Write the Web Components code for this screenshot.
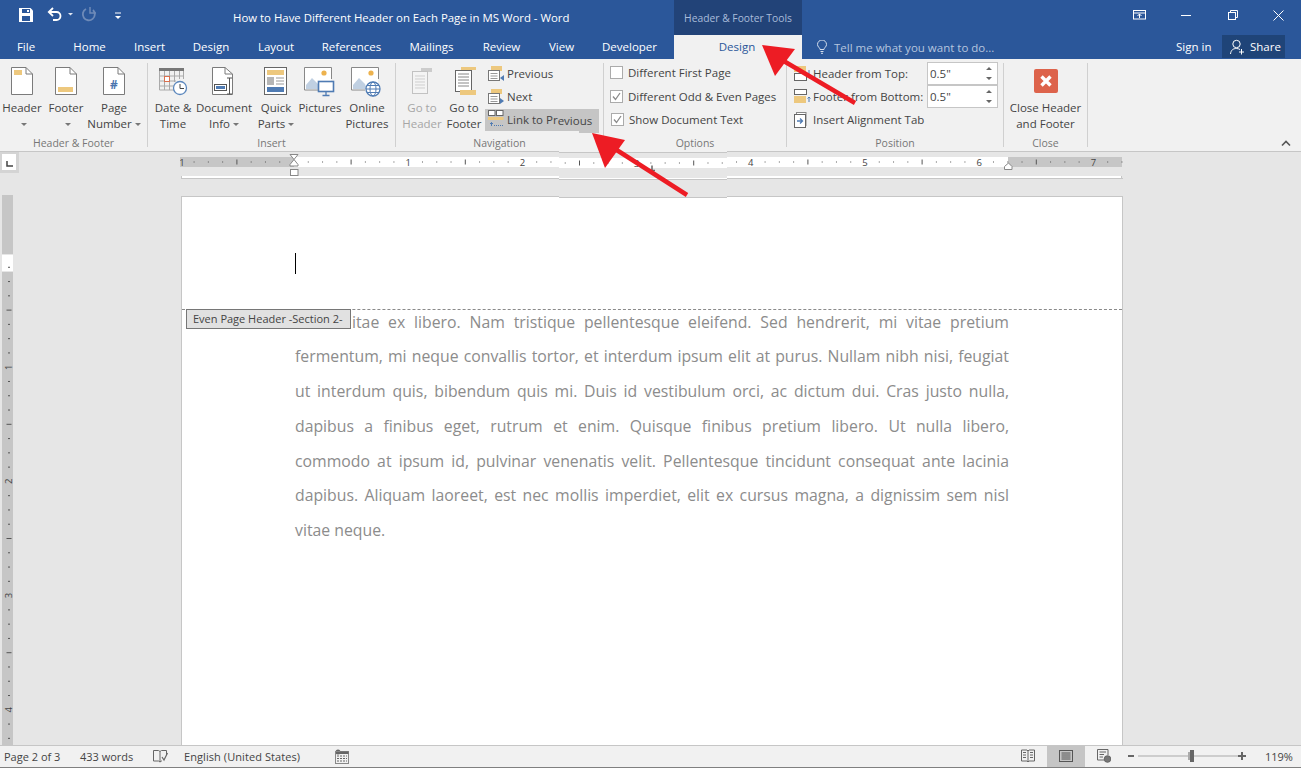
<!DOCTYPE html>
<html lang="en"><head><meta charset="utf-8"><title>Word</title>
<style>html,body{margin:0;padding:0;background:#e6e6e6}</style></head>
<body>
<word-app>
  <title-bar slot="top"></title-bar>
  <ribbon-bar slot="ribbon">
    <ribbon-group style="width:148px" label="Header &amp; Footer">
      <big-btn style="width:44px"><svg slot="icon" width="22" height="29" viewBox="0 0 22 29"><path d="M.5.5H15L21.5 7V27.5H.5Z" fill="#fff" stroke="#7b7b7b"/><path d="M15 .5V7H21.5" fill="none" stroke="#7b7b7b"/><rect x="3" y="3" width="8" height="5" fill="#edc87e"/></svg>Header<br><r-caret></r-caret></big-btn>
      <big-btn style="width:44px"><svg slot="icon" width="22" height="29" viewBox="0 0 22 29"><path d="M.5.5H15L21.5 7V27.5H.5Z" fill="#fff" stroke="#7b7b7b"/><path d="M15 .5V7H21.5" fill="none" stroke="#7b7b7b"/><rect x="3" y="20" width="15" height="5" fill="#edc87e"/></svg>Footer<br><r-caret></r-caret></big-btn>
      <big-btn style="width:52px"><svg slot="icon" width="22" height="29" viewBox="0 0 22 29"><path d="M.5.5H15L21.5 7V27.5H.5Z" fill="#fff" stroke="#7b7b7b"/><path d="M15 .5V7H21.5" fill="none" stroke="#7b7b7b"/><text x="11" y="22" text-anchor="middle" font-size="12" font-weight="700" font-family="Open Sans" fill="#4a74ad">#</text></svg>Page<br>Number<r-caret></r-caret></big-btn>
    </ribbon-group>
    <ribbon-group style="width:248px;padding-left:2px" label="Insert">
      <big-btn style="width:46px"><svg slot="icon" width="30" height="30" viewBox="0 0 30 30"><rect x="1" y="1" width="25" height="3" fill="#777"/><path d="M1.5 4V23H18M6.5 4V23M11.5 4V23M16.5 4V15M21.5 4V12M25.5 4V12M1.5 9H25.5M1.5 14H18M1.5 19H16" fill="none" stroke="#aaa"/><rect x="6.5" y="9.5" width="5" height="5" fill="#fff" stroke="#d9704f"/><circle cx="22" cy="21" r="6.5" fill="#fff" stroke="#5b87bd" stroke-width="1.3"/><path d="M22 17V21.5H26" fill="none" stroke="#444"/></svg>Date &amp;<br>Time</big-btn>
      <big-btn style="width:56px"><svg slot="icon" width="24" height="29" viewBox="0 0 24 29"><path d="M.5.5H13L20.5 7V27.5H.5Z" fill="#fff" stroke="#7b7b7b"/><path d="M13 .5V7H20.5" fill="none" stroke="#7b7b7b"/><rect x="2.5" y="17.5" width="12" height="6" fill="#fff" stroke="#555"/><rect x="4" y="19" width="9" height="3" fill="#4f7bb3"/><path d="M15 11H20M15 27H20M17.5 11V27" stroke="#555" fill="none"/></svg>Document<br>Info<r-caret></r-caret></big-btn>
      <big-btn style="width:48px"><svg slot="icon" width="24" height="29" viewBox="0 0 24 29"><rect x=".5" y=".5" width="22" height="27" fill="#fff" stroke="#666"/><rect x="3" y="3" width="17" height="5" fill="#edc87e"/><rect x="3" y="10" width="7" height="8" fill="#b5b5b5"/><path d="M12 11H20M12 14H20M12 17H20" stroke="#999"/><rect x="3" y="20" width="17" height="5" fill="#4f7bb3"/></svg>Quick<br>Parts<r-caret></r-caret></big-btn>
      <big-btn style="width:40px"><svg slot="icon" width="32" height="32" viewBox="0 0 32 32"><rect x="1" y="1" width="26" height="22" fill="#fff"/><path d="M.5 23V.5H27.5V12M.5 23H14" fill="none" stroke="#888"/><circle cx="20" cy="6" r="2.6" fill="#edb24d"/><path d="M2 22V18L8 11L14 17L16 22Z" fill="#c0d0e2"/><rect x="14.5" y="14.5" width="15" height="10" fill="#fff" stroke="#4f7bb3" stroke-width="1.6"/><path d="M22 25V28M18.5 28.5H25.5" stroke="#4f7bb3" stroke-width="1.3"/></svg>Pictures</big-btn>
      <big-btn style="width:54px"><svg slot="icon" width="32" height="32" viewBox="0 0 32 32"><rect x="1" y="1" width="26" height="22" fill="#fff"/><path d="M.5 23V.5H27.5V12M.5 23H14" fill="none" stroke="#888"/><circle cx="20" cy="6" r="2.6" fill="#edb24d"/><path d="M2 22V18L8 11L14 17L16 22Z" fill="#c0d0e2"/><circle cx="22" cy="22" r="7" fill="#fff" stroke="#4f7bb3" stroke-width="1.3"/><ellipse cx="22" cy="22" rx="3" ry="7" fill="none" stroke="#4f7bb3"/><path d="M15 22H29M16 18.5H28M16 25.5H28" stroke="#4f7bb3"/></svg>Online<br>Pictures</big-btn>
    </ribbon-group>
    <ribbon-group style="width:208px;padding-left:4px" label="Navigation">
      <big-btn style="width:44px;color:#a6a6a6"><svg slot="icon" width="22" height="29" viewBox="0 0 22 29"><rect x="10" y="1" width="11" height="4" fill="#ccc"/><rect x="1.500" y="4.500" width="15" height="22" fill="#f4f4f4" stroke="#c2c2c2"/><path d="M4 9H14M4 12H14M4 15H14M4 18H14M4 21H14" stroke="#cfcfcf"/></svg>Go to<br>Header</big-btn>
      <big-btn style="width:40px"><svg slot="icon" width="24" height="29" viewBox="0 0 24 29" style="margin-left:6px"><rect x="6" y="-2" width="15" height="5" fill="#edc87e"/><rect x=".5" y="3.500" width="16" height="21" fill="#fff" stroke="#666"/><path d="M3 7H14M3 10H14M3 13H14M3 16H14M3 19H14" stroke="#888"/><rect x="5" y="23" width="16" height="5" fill="#edc87e"/></svg>Go to<br>Footer</big-btn>
      <nav-stack style="margin-left:1px">
        <small-btn><svg slot="icon" width="17" height="16" viewBox="0 0 17 16"><rect x="3" y="0" width="11" height="5" fill="#edc87e"/><rect x=".5" y="4.500" width="11" height="10" fill="#fff" stroke="#777"/><path d="M2.500 7.500H9.500M2.500 10H9.500M2.500 12.500H9.500" stroke="#999"/><path d="M16 9V15L12 12Z" fill="#4f7bb3"/></svg>Previous</small-btn>
        <small-btn><svg slot="icon" width="17" height="16" viewBox="0 0 17 16"><rect x="3" y="0" width="11" height="5" fill="#edc87e"/><rect x=".5" y="4.500" width="11" height="10" fill="#fff" stroke="#777"/><path d="M2.500 7.500H9.500M2.500 10H9.500M2.500 12.500H9.500" stroke="#999"/><path d="M12 9V15L16 12Z" fill="#4f7bb3"/></svg>Next</small-btn>
        <small-btn style="background:#c5c5c5"><svg slot="icon" width="17" height="18" viewBox="0 0 17 18"><rect x=".5" y=".5" width="6.500" height="5" fill="#fff" stroke="#666"/><rect x="8.500" y=".5" width="6.500" height="5" fill="#fff" stroke="#666"/><rect x="0" y="7" width="15.500" height="3" fill="#edc87e"/><path d="M3.500 16V12.500M2 14L3.500 12.500L5 14" fill="none" stroke="#4f7bb3"/><path d="M6 15.500H15.500" stroke="#4f7bb3" stroke-dasharray="1 1"/></svg>Link to Pr<ghost-shift>evious</ghost-shift></small-btn>
      </nav-stack>
    </ribbon-group>
    <ribbon-group style="width:183px;padding-left:6px" label="Options">
      <check-stack>
      <check-row>Different First Page</check-row>
      <check-row checked>Different Odd &amp; Even Pages</check-row>
      <check-row checked style="margin-left:1px">Show Document Text</check-row>
      </check-stack>
    </ribbon-group>
    <ribbon-group style="width:217px;padding-left:4px" label="Position">
      <pos-grid>
        <small-btn><svg slot="icon" width="18" height="16" viewBox="0 0 18 16"><rect x="0" y="0" width="12" height="6" fill="#edc87e"/><rect x=".5" y="7.500" width="12" height="7" fill="#fff" stroke="#666"/><path d="M15 4V9" stroke="#4f7bb3"/></svg>Header from Top:</small-btn>
        <small-btn><svg slot="icon" width="18" height="16" viewBox="0 0 18 16"><rect x=".5" y=".5" width="12" height="5" fill="#fff" stroke="#666"/><rect x="0" y="7" width="12" height="7" fill="#edc87e"/><path d="M15 8V13M13.500 9.500L15 8L16.500 9.500" fill="none" stroke="#4f7bb3"/></svg>Footer from Bottom:</small-btn>
        <small-btn><svg slot="icon" width="18" height="16" viewBox="0 0 18 16"><rect x="2.500" y=".5" width="9.500" height="13" fill="#fff" stroke="#888"/><rect x=".5" y="2.500" width="11" height="13" fill="#fff" stroke="#666"/><path d="M3 9H8M6 6.500L8.500 9L6 11.500" fill="none" stroke="#4f7bb3" stroke-width="1.300"/></svg>Insert Alignment Tab</small-btn>
        <spin-box slot="spin">0.5"</spin-box>
        <spin-box slot="spin">0.5"</spin-box>
      </pos-grid>
    </ribbon-group>
    <ribbon-group style="width:84px" label="Close">
      <big-btn style="width:83px"><svg slot="icon" width="24" height="24" viewBox="0 0 24 24" style="margin-top:2px"><rect width="24" height="24" rx="2" fill="#dd634b"/><path d="M7.500 7.500L16.500 16.500M16.500 7.500L7.500 16.500" stroke="#fff" stroke-width="3.400"/></svg>Close Header<br>and Footer</big-btn>
    </ribbon-group>
    <svg slot="collapse" width="10" height="7" viewBox="0 0 10 7"><path d="M1 5.500L5 1.500L9 5.500" fill="none" stroke="#555" stroke-width="1.600"/></svg>
  </ribbon-bar>
  <doc-area slot="doc">
    <tab-select slot="corner"></tab-select>
    <h-ruler slot="hruler"></h-ruler>
    <v-ruler slot="vruler"></v-ruler>
    <doc-page slot="page">
      <p>itae ex libero. Nam tristique pellentesque eleifend. Sed hendrerit, mi vitae pretium</p>
      <p>fermentum, mi neque convallis tortor, et interdum ipsum elit at purus. Nullam nibh nisi, feugiat</p>
      <p>ut interdum quis, bibendum quis mi. Duis id vestibulum orci, ac dictum dui. Cras justo nulla,</p>
      <p>dapibus a finibus eget, rutrum et enim. Quisque finibus pretium libero. Ut nulla libero,</p>
      <p>commodo at ipsum id, pulvinar venenatis velit. Pellentesque tincidunt consequat ante lacinia</p>
      <p>dapibus. Aliquam laoreet, est nec mollis imperdiet, elit ex cursus magna, a dignissim sem nisl</p>
      <p class="last">vitae neque.</p>
    </doc-page>
  </doc-area>
  <status-bar slot="status"></status-bar>
  <arrow-layer slot="over"></arrow-layer>
</word-app>
<script>
const FONT='"Open Sans","Noto Sans",sans-serif';
const def=(name,css,html,extra)=>customElements.define(name,class extends HTMLElement{
  constructor(){super();this.attachShadow({mode:'open'}).innerHTML='<style>'+css+'</style>'+(typeof html==='function'?html(this):html);}
  connectedCallback(){if(extra)extra(this)}
});
def('word-app',`:host{display:block;position:relative;width:1301px;height:768px;overflow:hidden;font-family:${FONT};font-size:11.500px;color:#444;background:#e6e6e6}
.col{display:flex;flex-direction:column;height:100%}
.grow{flex:1;min-height:0;display:flex;flex-direction:column}`,
`<div class="col"><slot name="top"></slot><slot name="ribbon"></slot><div class="grow"><slot name="doc"></slot></div><slot name="status"></slot></div><slot name="over"></slot>`);

const tabs=[['File',58.5,26],['Home',62],['Insert',58],['Design',65],['Layout',65],['References',86],['Mailings',74],['Review',66],['View',54],['Developer',82]];
def('title-bar',`:host{display:block;background:#2b579a;color:#fff}
.top{display:flex;height:35px}
.qat{width:233px}
.title{width:441px;line-height:35px;font-size:11.400px;white-space:nowrap}
.ctx{width:128px;background:#224378;color:#a9bcda;text-align:center;line-height:37px;font-size:10.300px;white-space:nowrap}
.win{margin-left:auto;display:block}
.tabs{display:flex;height:24px;line-height:23px;font-size:11.500px}
.t{text-align:center;white-space:nowrap}
.file{width:52px}.filepad{width:6.500px}
.active{width:128px;margin-left:3.500px;background:#f1f1f1;color:#2b579a;padding-right:2px;box-sizing:border-box}
.tell{display:flex;align-items:center;gap:7px;margin-left:15px;color:#b6c5de;width:359px;white-space:nowrap}
.sign{width:46px;white-space:nowrap}
.share{width:63px;height:23px;background:#1f4478;display:flex;align-items:center;gap:5px;padding-left:8px;box-sizing:border-box;white-space:nowrap}`,
()=>`<div class="top">
<svg class="qat" height="35" viewBox="0 0 233 35"><path d="M19 8H30.500L33 10.500V22H19Z" fill="#fff"/><rect x="22" y="9" width="8" height="4" fill="#2b579a"/><rect x="22" y="16" width="8" height="5" fill="#2b579a"/><rect x="27" y="10" width="2" height="2" fill="#fff"/>
<path d="M49 12H56.500A4 4 0 0 1 56.500 20H53" fill="none" stroke="#fff" stroke-width="1.800"/><path d="M53 8L48.800 12L53 16" fill="none" stroke="#fff" stroke-width="1.800"/><path d="M68 13H73L70.500 15.500Z" fill="#dfe6f2"/>
<path d="M86 9A6 6 0 1 0 93 10" fill="none" stroke="#6f8bb8" stroke-width="1.800"/><path d="M90 7V13H96" fill="none" stroke="#6f8bb8" stroke-width="1.500"/>
<path d="M115 13H121" stroke="#fff"/><path d="M115 16H121L118 19Z" fill="#fff"/></svg>
<div class="title">How to Have Different Header on Each Page in MS Word - Word</div>
<div class="ctx">Header &amp; Footer Tools</div>
<svg class="win" width="181" height="35" viewBox="1120 0 181 35" fill="none" stroke="#fff"><rect x="1133.500" y="10.500" width="12" height="8.500"/><path d="M1133 13H1146" /><path d="M1139.500 18V14M1137.500 16L1139.500 14L1141.500 16"/><path d="M1181 15.500H1191"/><rect x="1228.500" y="12.500" width="7" height="7"/><path d="M1230.500 12.500V10.500H1237.500V17.500H1235.500"/><path d="M1273.500 10.500L1283.500 20.500M1283.500 10.500L1273.500 20.500"/></svg>
</div>
<div class="tabs">
${tabs.map((t,i)=>i==0?`<div class="t file">${t[0]}</div><div class="filepad"></div>`:`<div class="t" style="width:${t[1]}px">${t[0]}</div>`).join('')}
<div class="t active">Design</div>
<div class="tell"><svg width="10" height="14" viewBox="0 0 10 14" fill="none" stroke="#d5deec"><path d="M3 9.500C3 7.500 .5 7 .5 4.500A4.500 4.500 0 0 1 9.500 4.500C9.500 7 7 7.500 7 9.500ZM3.500 11.500H6.500M4 13.300H6"/></svg>Tell me what you want to do...</div>
<div class="sign">Sign in</div>
<div class="share"><svg width="15" height="16" viewBox="0 0 15 16" fill="none" stroke="#fff"><circle cx="6.500" cy="5" r="3.700"/><path d="M.5 15C1 11 3 9.500 6.500 9.500C8 9.500 9 10 10 10.500"/><path d="M11.500 10V15.500M9 13H14"/></svg>Share</div>
</div>`);

def('ribbon-bar',`:host{display:flex;position:relative;height:93px;box-sizing:border-box;padding-top:4px;background:#f1f1f1;border-bottom:1px solid #c6c6c6}
.c{position:absolute;right:10px;top:81px;line-height:0}`,`<slot></slot><span class="c"><slot name="collapse"></slot></span>`);
def('ribbon-group',`:host{display:flex;flex-direction:column;height:84px;border-right:1px solid #d0d0d0;box-sizing:border-box;flex:none}
.c{display:flex;height:74px}
.l{height:10px;line-height:12px;text-align:center;color:#777;font-size:10.500px;white-space:nowrap}`,
(h)=>`<div class="c"><slot></slot></div><div class="l">${(h.getAttribute('label')||'').replace('&','&amp;')}</div>`,
(h)=>{ const pl=parseFloat(h.style.paddingLeft)||0; h.shadowRoot.querySelector('.l').style.marginLeft=(-pl)+'px';});
def('big-btn',`:host{display:flex;flex-direction:column;align-items:center;text-align:center;line-height:16px;white-space:nowrap;flex:none}
.i{height:33px;padding-top:4px;width:100%;display:flex;justify-content:center;align-items:flex-start;line-height:0}`,`<div class="i"><slot name="icon"></slot></div><div><slot></slot></div>`);
def('r-caret',`:host{display:inline-block;width:0;height:0;margin-left:3px;border-left:3.500px solid transparent;border-right:3.500px solid transparent;border-top:3.500px solid #777;vertical-align:middle}`,``);
def('ghost-shift',`:host{display:inline-block;position:relative;top:1px}`,`<slot></slot>`);
def('nav-stack',`:host{display:flex;flex-direction:column;width:114px;flex:none}`,`<slot></slot>`);
def('check-stack',`:host{display:flex;flex-direction:column;flex:none}`,`<slot></slot>`);
def('small-btn',`:host{display:flex;align-items:center;height:23px;padding:0 0 2px 3px;white-space:nowrap;box-sizing:border-box}
:host(:last-child){height:22px}
.i{width:19px;flex:none;display:flex;align-items:center;line-height:0}`,`<span class="i"><slot name="icon"></slot></span><slot></slot>`);
def('check-row',`:host{display:flex;align-items:center;height:23.500px;gap:5px;white-space:nowrap;position:relative;top:-2px}
.b{width:11px;height:11px;border:1px solid #ababab;background:#fff;line-height:0;flex:none}`,
(h)=>`<span class="b">${h.hasAttribute('checked')?'<svg width="11" height="11" viewBox="0 0 11 11"><path d="M2 5.500L4.500 8.500L9 2" fill="none" stroke="#8a8a8a" stroke-width="1.300"/></svg>':''}</span><slot></slot>`);
def('pos-grid',`:host{display:flex;width:207px;flex:none}
.l{width:136px;flex:none;}.r{width:71px;flex:none;margin-top:-1px}`,`<div class="l"><slot></slot></div><div class="r"><slot name="spin"></slot></div>`);
def('spin-box',`:host{display:flex;align-items:center;justify-content:space-between;box-sizing:border-box;width:71px;height:23px;border:1px solid #c6c6c6;background:#fff;padding:0 5px 0 2px;color:#444}
svg{display:block}`,`<slot></slot><svg width="6" height="16" viewBox="0 0 6 16"><path d="M0 4L3 1L6 4ZM0 11H6L3 14Z" fill="#666"/></svg>`);
def('doc-area',`:host{display:grid;flex:1;min-height:0;grid-template-columns:180px 943px 1fr;grid-template-rows:44px 1fr;background:#e6e6e6;overflow:hidden}
.corner{grid-column:1;grid-row:1;min-height:0}.h{grid-column:2;grid-row:1;min-height:0}.v{grid-column:1;grid-row:2;min-height:0;margin-top:-1px}.p{grid-column:2;grid-row:2;padding-left:1px;min-height:0}`,
`<div class="corner"><slot name="corner"></slot></div><div class="h"><slot name="hruler"></slot></div><div class="v"><slot name="vruler"></slot></div><div class="p"><slot name="page"></slot></div>`);
def('tab-select',`:host{display:block;width:19px;height:21px;background:#d4d4d4;box-sizing:border-box;padding:2px 3px 3px 2px}
.w{background:#fff;height:100%;line-height:0}`,`<div class="w"><svg width="14" height="16" viewBox="0 0 14 16"><path d="M5 7V12H11" fill="none" stroke="#444" stroke-width="1.500"/></svg></div>`);

function hRuler(){
  let s='<rect x="0" y="5" width="942" height="10" fill="#fff"/><rect x="0" y="5" width="114" height="10" fill="#c6c6c6"/><rect x="828" y="5" width="114" height="10" fill="#c6c6c6"/>';
  s+='<rect x="379" y="5" width="168" height="1" fill="#e6e6e6"/><rect x="379" y="15" width="168" height="1" fill="#fff"/>';
  const Z=114.2,O=114;
  for(let k=-8;k<=63;k++){
    const x=O+k*Z/8; if(x<-1||x>942)continue;
    const dy=(x>379&&x<547)?1:0;
    if(k%8===0){ if(k===0)continue;
      s+=`<text x="${Math.max(x,2)}" y="${13.500+dy}" text-anchor="middle" font-size="9.500" fill="#444" font-family="Open Sans">${Math.abs(k/8)}</text>`;
    }else if(k%4===0){ s+=`<rect x="${x-.5}" y="${7.500+dy}" width="1" height="5" fill="#555"/>`;
    }else s+=`<rect x="${x-.5}" y="${9.500+dy}" width="1" height="1" fill="#555"/>`;
  }
  s+='<path d="M110 2.500H118L114 7.500L118 12.500V14H110V12.500L114 7.500Z" fill="#fff" stroke="#888"/><rect x="110.500" y="17.500" width="7.500" height="6" fill="#fff" stroke="#888"/>';
  s+='<path d="M828.500 11L832 14.500V17.500H824.500V14.500Z" fill="#fff" stroke="#888"/>';
  s+='<path d="M472 13.500V18M469 18.500H475" stroke="#666" stroke-width="1.500"/>';
  s+='<rect x="1" y="24" width="941" height="2" fill="#fff"/><rect x="1" y="26" width="942" height="1" fill="#c6c6c6"/><rect x="1" y="24" width="1" height="3" fill="#c6c6c6"/><rect x="941" y="24" width="1" height="3" fill="#c6c6c6"/>';
  s+='<rect x="379" y="24" width="168" height="2" fill="#e6e6e6"/><rect x="379" y="26" width="168" height="2" fill="#fff"/><rect x="379" y="27" width="168" height="1" fill="#c6c6c6"/>';
  return `<svg width="943" height="44" viewBox="0 0 943 44" style="display:block">${s}</svg>`;
}
def('h-ruler',`:host{display:block;height:44px}`,hRuler);
function vRuler(){
  let s='<rect x="2" y="0" width="11" height="59" fill="#c6c6c6"/><rect x="2" y="60" width="11" height="16" fill="#fff"/><rect x="2" y="77" width="11" height="480" fill="#c6c6c6"/>';
  const O=58,Z=114.2;
  for(let k=1;k<=37;k++){
    const y=O+k*Z/8; if(y>548)break;
    if(k%8===0)s+=`<text transform="translate(12,${y}) rotate(-90)" text-anchor="middle" font-size="9.500" fill="#444" font-family="Open Sans">${k/8}</text>`;
    else if(k%4===0)s+=`<rect x="6.500" y="${y-.5}" width="5" height="1" fill="#555"/>`;
    else s+=`<rect x="8" y="${y-.5}" width="2" height="1" fill="#555"/>`;
  }
  return `<svg width="20" height="555" viewBox="0 0 20 555" style="display:block">${s}</svg>`;
}
def('v-ruler',`:host{display:block;height:100%;overflow:hidden}`,vRuler);
def('doc-page',`:host{display:block;position:relative;box-sizing:border-box;width:942px;height:600px;background:#fff;border:1px solid #c6c6c6;font-size:15.800px;color:#8c8c8c;line-height:34.800px}
.hd{height:113px;box-sizing:border-box;border-bottom:1px dashed #8a8a8a;padding:56px 0 0 113px}
.cur{width:1px;height:21px;background:#000}
.bd{margin:-5.500px 0 0 113px;width:714px}
::slotted(p){margin:0;text-align:justify;text-align-last:justify;white-space:nowrap}
::slotted(p:first-child){padding-left:57px}
::slotted(p.last){text-align-last:left}
.lab{position:absolute;left:4px;top:112px;width:165px;height:20px;box-sizing:border-box;border:1px solid #767676;background:#e1e1e1;color:#444;font-size:11px;line-height:18px;padding-left:6px;white-space:nowrap}`,
`<div class="hd"><div class="cur"></div></div><div class="bd"><slot></slot></div><div class="lab">Even Page Header -Section 2-</div>`);
def('status-bar',`:host{display:flex;align-items:center;height:23px;box-sizing:border-box;background:#f1f1f1;border-top:1px solid #c6c6c6;border-bottom:1px solid #808080;padding-bottom:1px;font-size:11px;color:#444;white-space:nowrap;flex:none}
.i{display:block;flex:none}
.hl{width:38px;height:21px;background:#c5c5c5;display:flex;align-items:center;justify-content:center;margin:0 12px}`,
`<span style="width:80px;padding-left:4px;box-sizing:border-box">Page 2 of 3</span><span style="width:73px">433 words</span>
<svg class="i" width="31" height="16" viewBox="0 0 31 16" fill="none" stroke="#666"><path d="M.5 2.500H5.500L7 3.500V14L5.500 13H.5ZM7 3.500L8.500 2.500H13.500V7M7 14L8.500 13H9"/><path d="M9 9L11 12L14.500 5" stroke-width="1.200"/></svg>
<span style="width:151px;letter-spacing:.08px">English (United States)</span>
<svg class="i" width="14" height="15" viewBox="0 0 14 15"><circle cx="3" cy="3" r="2.500" fill="#666"/><rect x=".5" y="2.500" width="13" height="12" fill="none" stroke="#888"/><path d="M5 2.500H13.500V5H5Z" fill="#666"/><path d="M2 7H12M2 9.500H12M2 12H12" stroke="#666" stroke-dasharray="2 1"/></svg>
<span style="flex:1"></span>
<svg class="i" width="14" height="14" viewBox="0 0 14 14" fill="none" stroke="#666"><path d="M.5 1H6L7 2L8 1H13.500V12H8L7 13L6 12H.5ZM7 2V13M2 3.500H5M2 6H5M2 8.500H5M9 3.500H12M9 6H12M9 8.500H12"/></svg>
<span class="hl"><svg width="14" height="12" viewBox="0 0 14 12" fill="none" stroke="#555"><rect x=".5" y=".5" width="13" height="11"/><path d="M2.500 3H11.500M2.500 5H11.500M2.500 7H11.500M2.500 9H11.500"/></svg></span>
<svg class="i" width="14" height="14" viewBox="0 0 14 14" fill="none" stroke="#666"><path d="M7 11H.5V.5H11V6M2.500 3H9M2.500 5.500H7M2.500 8H6"/><circle cx="10.500" cy="10" r="3.300" fill="#777"/></svg>
<span style="width:17px"></span>
<svg class="i" width="118" height="14" viewBox="0 0 118 14"><rect x="0" y="6" width="6" height="2" fill="#666"/><rect x="10" y="6.500" width="100" height="1" fill="#aaa"/><rect x="62" y="1" width="4" height="12" fill="#666"/><rect x="60" y="3" width="2" height="8" fill="#aaa"/><path d="M118 7H110M114 3V11" stroke="#666" stroke-width="2"/></svg>
<span style="width:19px"></span><span style="width:36px">119%</span>`);
def('arrow-layer',`:host{position:absolute;left:0;top:0;width:1301px;height:768px;pointer-events:none;display:block}
.ext{position:absolute;left:579px;top:131px;width:20px;height:2px;background:#c5c5c5}
svg{position:absolute;left:0;top:0}`,
`<div class="ext"></div><svg width="1301" height="768" viewBox="0 0 1301 768"><rect x="559" y="151" width="168" height="1" fill="#f1f1f1"/><rect x="559" y="152" width="168" height="1" fill="#c6c6c6"/><rect x="559" y="196" width="168" height="1" fill="#e6e6e6"/><rect x="559" y="197" width="168" height="1" fill="#c6c6c6"/><path d="M855 103L782 60" stroke="#ed1c24" stroke-width="4.500"/><path d="M762 45L795 49L775 76Z" fill="#ed1c24"/><path d="M687 195L612 147" stroke="#ed1c24" stroke-width="4.500"/><path d="M592 133L625 140L605 168Z" fill="#ed1c24"/></svg>`);
</script>
</body></html>
